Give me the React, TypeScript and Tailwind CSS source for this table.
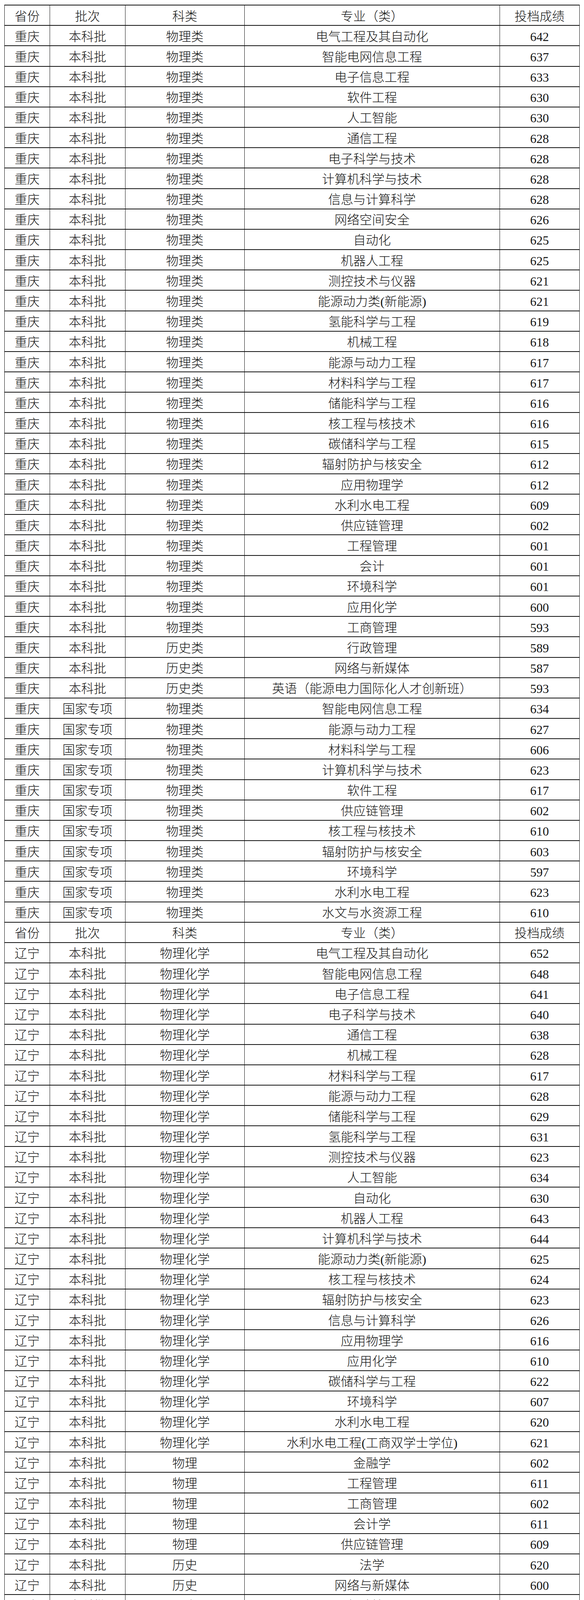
import React from "react";

type Row = [string, string, string, string, string];

const cq: [string, string, string, string][] = [
  ["本科批", "物理类", "电气工程及其自动化", "642"],
  ["本科批", "物理类", "智能电网信息工程", "637"],
  ["本科批", "物理类", "电子信息工程", "633"],
  ["本科批", "物理类", "软件工程", "630"],
  ["本科批", "物理类", "人工智能", "630"],
  ["本科批", "物理类", "通信工程", "628"],
  ["本科批", "物理类", "电子科学与技术", "628"],
  ["本科批", "物理类", "计算机科学与技术", "628"],
  ["本科批", "物理类", "信息与计算科学", "628"],
  ["本科批", "物理类", "网络空间安全", "626"],
  ["本科批", "物理类", "自动化", "625"],
  ["本科批", "物理类", "机器人工程", "625"],
  ["本科批", "物理类", "测控技术与仪器", "621"],
  ["本科批", "物理类", "能源动力类(新能源)", "621"],
  ["本科批", "物理类", "氢能科学与工程", "619"],
  ["本科批", "物理类", "机械工程", "618"],
  ["本科批", "物理类", "能源与动力工程", "617"],
  ["本科批", "物理类", "材料科学与工程", "617"],
  ["本科批", "物理类", "储能科学与工程", "616"],
  ["本科批", "物理类", "核工程与核技术", "616"],
  ["本科批", "物理类", "碳储科学与工程", "615"],
  ["本科批", "物理类", "辐射防护与核安全", "612"],
  ["本科批", "物理类", "应用物理学", "612"],
  ["本科批", "物理类", "水利水电工程", "609"],
  ["本科批", "物理类", "供应链管理", "602"],
  ["本科批", "物理类", "工程管理", "601"],
  ["本科批", "物理类", "会计", "601"],
  ["本科批", "物理类", "环境科学", "601"],
  ["本科批", "物理类", "应用化学", "600"],
  ["本科批", "物理类", "工商管理", "593"],
  ["本科批", "历史类", "行政管理", "589"],
  ["本科批", "历史类", "网络与新媒体", "587"],
  ["本科批", "历史类", "英语（能源电力国际化人才创新班）", "593"],
  ["国家专项", "物理类", "智能电网信息工程", "634"],
  ["国家专项", "物理类", "能源与动力工程", "627"],
  ["国家专项", "物理类", "材料科学与工程", "606"],
  ["国家专项", "物理类", "计算机科学与技术", "623"],
  ["国家专项", "物理类", "软件工程", "617"],
  ["国家专项", "物理类", "供应链管理", "602"],
  ["国家专项", "物理类", "核工程与核技术", "610"],
  ["国家专项", "物理类", "辐射防护与核安全", "603"],
  ["国家专项", "物理类", "环境科学", "597"],
  ["国家专项", "物理类", "水利水电工程", "623"],
  ["国家专项", "物理类", "水文与水资源工程", "610"],
];

const ln: [string, string, string, string][] = [
  ["本科批", "物理化学", "电气工程及其自动化", "652"],
  ["本科批", "物理化学", "智能电网信息工程", "648"],
  ["本科批", "物理化学", "电子信息工程", "641"],
  ["本科批", "物理化学", "电子科学与技术", "640"],
  ["本科批", "物理化学", "通信工程", "638"],
  ["本科批", "物理化学", "机械工程", "628"],
  ["本科批", "物理化学", "材料科学与工程", "617"],
  ["本科批", "物理化学", "能源与动力工程", "628"],
  ["本科批", "物理化学", "储能科学与工程", "629"],
  ["本科批", "物理化学", "氢能科学与工程", "631"],
  ["本科批", "物理化学", "测控技术与仪器", "623"],
  ["本科批", "物理化学", "人工智能", "634"],
  ["本科批", "物理化学", "自动化", "630"],
  ["本科批", "物理化学", "机器人工程", "643"],
  ["本科批", "物理化学", "计算机科学与技术", "644"],
  ["本科批", "物理化学", "能源动力类(新能源)", "625"],
  ["本科批", "物理化学", "核工程与核技术", "624"],
  ["本科批", "物理化学", "辐射防护与核安全", "623"],
  ["本科批", "物理化学", "信息与计算科学", "626"],
  ["本科批", "物理化学", "应用物理学", "616"],
  ["本科批", "物理化学", "应用化学", "610"],
  ["本科批", "物理化学", "碳储科学与工程", "622"],
  ["本科批", "物理化学", "环境科学", "607"],
  ["本科批", "物理化学", "水利水电工程", "620"],
  ["本科批", "物理化学", "水利水电工程(工商双学士学位)", "621"],
  ["本科批", "物理", "金融学", "602"],
  ["本科批", "物理", "工程管理", "611"],
  ["本科批", "物理", "工商管理", "602"],
  ["本科批", "物理", "会计学", "611"],
  ["本科批", "物理", "供应链管理", "609"],
  ["本科批", "历史", "法学", "620"],
  ["本科批", "历史", "网络与新媒体", "600"],
  ["本科批", "历史", "行政管理", "605"],
  ["本科批", "历史", "英语(能源电力国际化人才创新班)", "603"],
  ["本科批", "历史", "翻译", "601"],
];

const gz: [string, string, string, string][] = [
  ["本科批", "物理类", "电气工程及其自动化", "626"],
  ["本科批", "物理类", "智能电网信息工程", "622"],
  ["本科批", "物理类", "电子信息工程", "619"],
  ["本科批", "物理类", "电子科学与技术", "618"],
  ["本科批", "物理类", "通信工程", "616"],
  ["本科批", "物理类", "机械工程", "613"],
  ["本科批", "物理类", "能源与动力工程", "611"],
  ["本科批", "物理类", "材料科学与工程", "611"],
  ["本科批", "物理类", "储能科学与工程", "609"],
  ["本科批", "物理类", "人工智能", "618"],
  ["本科批", "物理类", "测控技术与仪器", "607"],
  ["本科批", "物理类", "氢能科学与工程", "610"],
  ["本科批", "物理类", "机器人工程", "613"],
  ["本科批", "物理类", "自动化", "616"],
  ["本科批", "物理类", "计算机科学与技术", "617"],
  ["本科批", "物理类", "软件工程", "617"],
  ["本科批", "物理类", "网络空间安全", "615"],
  ["本科批", "物理类", "能源动力类(新能源)", "609"],
  ["本科批", "物理类", "核工程与核技术", "610"],
  ["本科批", "物理类", "辐射防护与核安全", "603"],
  ["本科批", "物理类", "信息与计算科学", "607"],
  ["本科批", "物理类", "数据科学与大数据技术", "612"],
  ["本科批", "物理类", "应用物理学", "608"],
  ["本科批", "物理类", "应用化学", "590"],
  ["本科批", "物理类", "环境科学", "585"],
  ["本科批", "物理类", "水利水电工程", "604"],
  ["本科批", "物理类", "水文与水资源工程", "603"],
  ["本科批", "物理类", "水利水电工程(工商双学士学位)", "601"],
  ["本科批", "物理类", "工程管理", "591"],
  ["本科批", "物理类", "金融学", "586"],
  ["本科批", "物理类", "工商管理", "583"],
  ["本科批", "物理类", "供应链管理", "601"],
  ["本科批", "物理类", "会计学", "600"],
  ["本科批", "历史类", "法学", "614"],
  ["本科批", "历史类", "网络与新媒体", "597"],
  ["本科批", "历史类", "行政管理", "600"],
  ["本科批", "历史类", "公共事业管理", "596"],
  ["国家专项", "物理类", "工程管理", "597"],
  ["国家专项", "物理类", "供应链管理", "583"],
  ["国家专项", "物理类", "会计学", "596"],
  ["国家专项", "物理类", "智能电网信息工程", "618"],
  ["国家专项", "物理类", "能源与动力工程", "610"],
  ["国家专项", "物理类", "机械工程", "603"],
  ["国家专项", "物理类", "通信工程", "615"],
  ["国家专项", "物理类", "测控技术与仪器", "601"],
  ["国家专项", "物理类", "软件工程", "613"],
  ["国家专项", "物理类", "计算机科学与技术", "616"],
  ["国家专项", "物理类", "能源动力类(新能源)", "610"],
  ["国家专项", "物理类", "核工程与核技术", "610"],
  ["国家专项", "物理类", "信息与计算科学", "609"],
  ["国家专项", "物理类", "水文与水资源工程", "582"],
  ["国家专项", "物理类", "水利水电工程", "605"],
];

const header: Row = ["省份", "批次", "科类", "专业（类）", "投档成绩"];

function TableRow({ cells, low }: { cells: Row; low?: boolean }) {
  return (
    <div className="grid grid-cols-[116px_192.5px_305.5px_652.5px_1fr] h-[52.18px] border-b-2 border-[#111]">
      {cells.map((c, i) => (
        <div
          key={i}
          className={
            i < 4
              ? "flex items-center justify-center border-r border-[#111] pt-[5px] whitespace-nowrap"
              : low
              ? "flex items-center justify-center pt-[16px] whitespace-nowrap"
              : "flex items-center justify-center pt-[5px] whitespace-nowrap"
          }
        >
          {c}
        </div>
      ))}
    </div>
  );
}

export default function App() {
  return (
    <div className="w-[1494px] h-[7013px] overflow-hidden bg-white pt-[12px]">
      <div
        className="ml-[11px] w-[1472px] border-t-2 border-l border-r border-[#111] text-[32px] font-light leading-none text-[#141414]"
        style={{ fontFamily: "'Liberation Serif', 'Noto Sans CJK SC', serif" }}
      >
        <TableRow cells={header} />
        {cq.map((r, i) => (
          <TableRow key={"cq" + i} cells={["重庆", r[0], r[1], r[2], r[3]]} />
        ))}
        <TableRow cells={header} />
        {ln.map((r, i) => (
          <TableRow key={"ln" + i} cells={["辽宁", r[0], r[1], r[2], r[3]]} />
        ))}
        <TableRow cells={header} />
        {gz.map((r, i) => (
          <TableRow key={"gz" + i} cells={["贵州", r[0], r[1], r[2], r[3]]} low />
        ))}
      </div>
    </div>
  );
}
